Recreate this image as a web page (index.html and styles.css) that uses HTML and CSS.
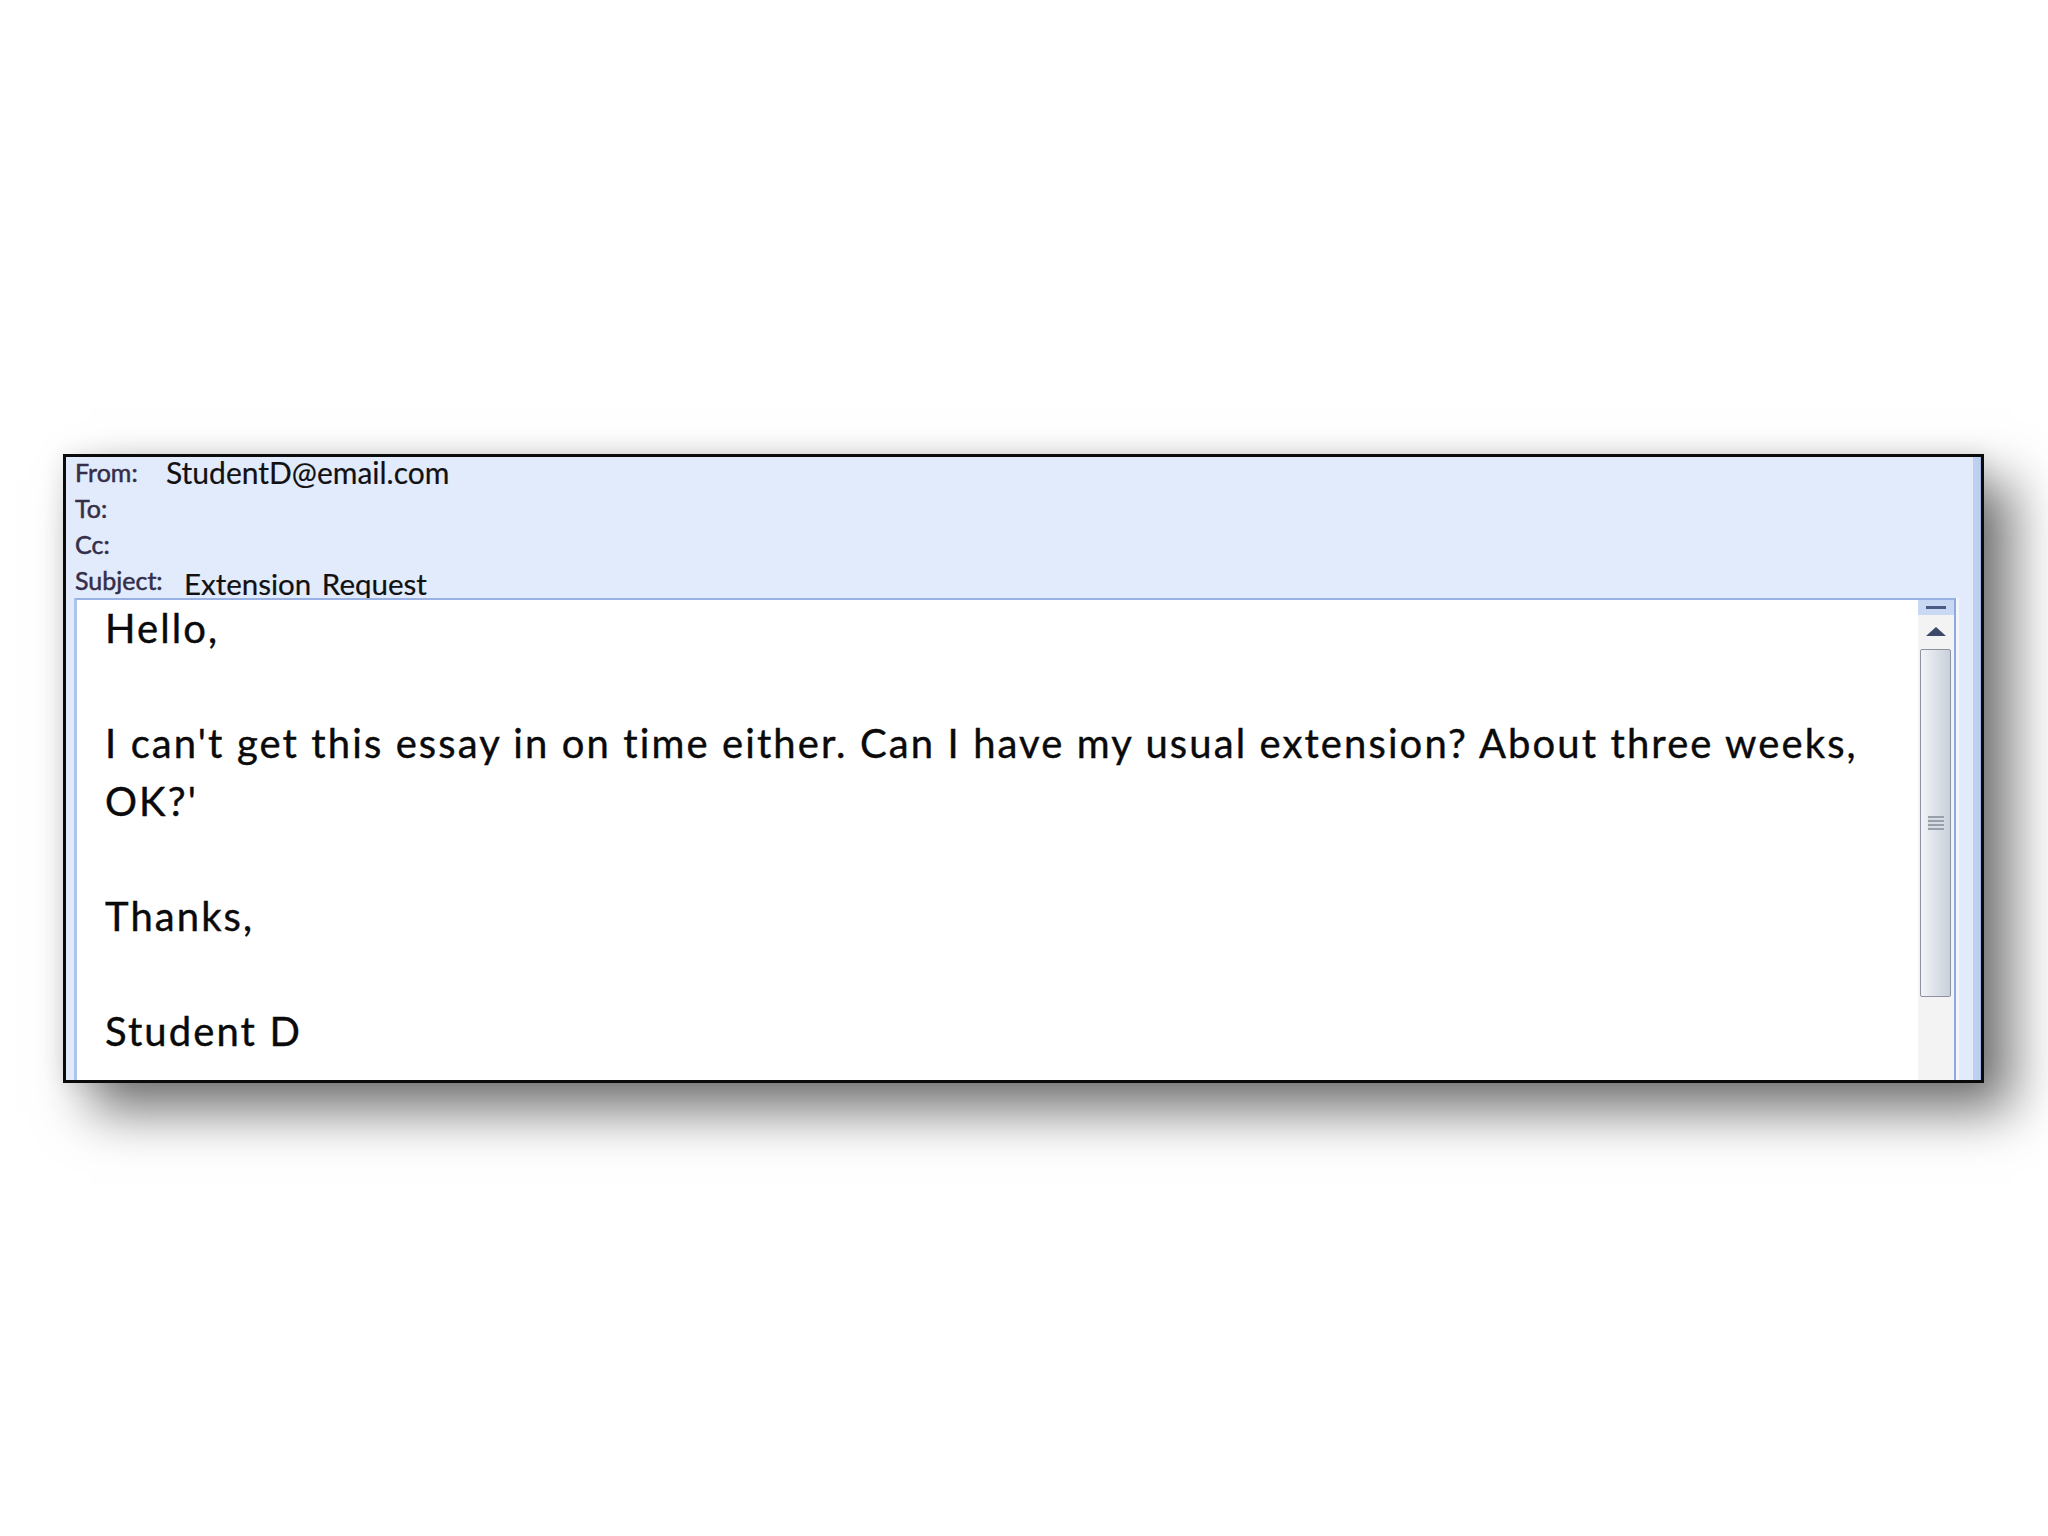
FILE: index.html
```html
<!DOCTYPE html>
<html lang="en">
<head>
<meta charset="utf-8">
<title>Extension Request</title>
<link rel="stylesheet" href="styles.css">
</head>
<body>
<div class="page">
  <div class="window">
    <div class="header">
      <div class="row"><span class="label">From:</span><span class="value">StudentD@email.com</span></div>
      <div class="row"><span class="label">To:</span></div>
      <div class="row"><span class="label">Cc:</span></div>
      <div class="row row-subject"><span class="label">Subject:</span><span class="value value-subject">Extension Request</span></div>
    </div>
    <div class="compose">
      <div class="text">
        <p>Hello,</p>
        <p>I can't get this essay in on time either. Can I have my usual extension? About three weeks, OK?'</p>
        <p>Thanks,</p>
        <p>Student D</p>
      </div>
      <div class="scrollbar">
        <div class="split"><span class="dash"></span></div>
        <div class="arrow-btn"><span class="tri"></span></div>
        <div class="thumb"><span class="grip"></span></div>
        <div class="track"></div>
      </div>
    </div>
  </div>
</div>
</body>
</html>
```
FILE: styles.css
```css
html, body {
  margin: 0;
  background: #ffffff;
}

.page {
  box-sizing: border-box;
  min-height: 1536px;
  padding: 454px 0 0 63px;
}

.window {
  box-sizing: border-box;
  width: 1921px;
  height: 629px;
  border: 3px solid #0b0b0b;
  background: #e2ebfc;
  display: flex;
  flex-direction: column;
  overflow: hidden;
  box-shadow: 28px 28px 50px rgba(0, 0, 0, 0.55),
              0 0 22px rgba(0, 0, 0, 0.09),
              inset -1px 0 0 #a3b7e4,
              inset -8px 0 0 #bfcff0;
}

.header {
  padding-left: 9px;
  font-family: Lato, "Noto Sans", sans-serif;
}

.row {
  display: flex;
  align-items: flex-start;
  height: 36px;
}

.row-subject {
  height: 33px;
}

.label {
  font-size: 25px;
  line-height: 30px;
  color: #342e4a;
  -webkit-text-stroke: 0.5px #342e4a;
  min-width: 91px;
}

.value {
  font-size: 30px;
  line-height: 30px;
  color: #111111;
  -webkit-text-stroke: 0.2px #111111;
}

.value-subject {
  font-size: 29.5px;
  margin-left: 18px;
  margin-top: 4px;
  word-spacing: 3px;
}

.compose {
  flex: 1;
  min-height: 0;
  display: flex;
  margin: 0 25px 0 8px;
  background: #ffffff;
  border-top: 2px solid #9ab2e3;
  border-left: 3px solid #adc2ec;
  border-right: 2px solid #8eaae0;
  box-shadow: 3px 0 0 #f3f6fd;
}

.text {
  flex: 1;
  padding-left: 28px;
  font-family: Lato, "Noto Sans", sans-serif;
  font-size: 40px;
  line-height: 57.5px;
  letter-spacing: 2.1px;
  color: #0a0a0a;
  -webkit-text-stroke: 0.4px #0a0a0a;
}

.text p {
  margin: 0 0 57.5px;
}

.scrollbar {
  width: 36px;
  background: #f3f3f3;
  display: flex;
  flex-direction: column;
}

.split {
  height: 15px;
  background: #c9d8f3;
  display: flex;
  align-items: center;
  justify-content: center;
}

.dash {
  width: 20px;
  height: 3px;
  background: #4a5a82;
}

.arrow-btn {
  box-sizing: border-box;
  height: 33px;
  padding-top: 12px;
  display: flex;
  justify-content: center;
}

.tri {
  width: 0;
  height: 0;
  border-left: 10px solid transparent;
  border-right: 10px solid transparent;
  border-bottom: 9px solid #3b4868;
}

.thumb {
  box-sizing: border-box;
  height: 348px;
  margin: 1px 3px 0 2px;
  border: 1px solid #8d909e;
  border-radius: 2px;
  background: linear-gradient(to right, #f2f4f7, #dfe4ea 45%, #c9d0d9);
  display: flex;
  align-items: center;
  justify-content: center;
}

.grip {
  width: 16px;
  height: 14px;
  background: repeating-linear-gradient(to bottom, #9aa0ab 0 2px, #d7dbe2 2px 4px);
}

.track {
  flex: 1;
}
```
